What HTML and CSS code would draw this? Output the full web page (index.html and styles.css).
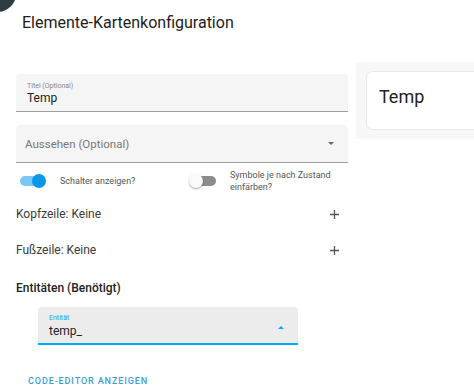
FILE: index.html
```html
<!DOCTYPE html>
<html lang="de">
<head>
  <meta charset="UTF-8">
  <title>Elemente-Kartenkonfiguration</title>
  <link rel="stylesheet" href="styles.css">
</head>
<body>
  <div class="dialog">
    <div class="corner"></div>
    <h2 class="dialog-title">Elemente-Kartenkonfiguration</h2>

    <div class="content">
      <div class="editor">
        <div class="field">
          <span class="field-label">Titel (Optional)</span>
          <span class="field-value">Temp</span>
        </div>

        <div class="field select">
          <span class="placeholder">Aussehen (Optional)</span>
          <span class="arrow down"></span>
        </div>

        <div class="switches">
          <div class="switch-item">
            <span class="switch on"><span class="knob"></span></span>
            <span class="switch-text">Schalter anzeigen?</span>
          </div>
          <div class="switch-item">
            <span class="switch off"><span class="knob"></span></span>
            <span class="switch-text">Symbole je nach Zustand<br>einfärben?</span>
          </div>
        </div>

        <div class="row">
          <span>Kopfzeile: Keine</span>
          <svg class="plus" viewBox="0 0 12 12"><path d="M6 1v10M1 6h10"/></svg>
        </div>
        <div class="row">
          <span>Fußzeile: Keine</span>
          <svg class="plus" viewBox="0 0 12 12"><path d="M6 1v10M1 6h10"/></svg>
        </div>

        <h3 class="section">Entitäten (Benötigt)</h3>

        <div class="field entity focused">
          <span class="field-label">Entität</span>
          <span class="field-value">temp_</span>
          <span class="arrow up"></span>
        </div>

        <a class="text-button" href="#">Code-Editor anzeigen</a>
      </div>

      <div class="preview">
        <div class="card">Temp</div>
      </div>
    </div>
  </div>
</body>
</html>
```

FILE: styles.css
```css
body {
  margin: 0;
  background-color: #ffffff;
  font-family: Roboto, "Noto Sans", Arial, sans-serif;
  color: #212121;
  overflow: hidden;
}
.dialog {
  position: relative;
  width: 474px;
  height: 390px;
  overflow: hidden;
}
.corner {
  position: absolute;
  left: -22px;
  top: -24px;
  width: 38px;
  height: 36px;
  border-radius: 50%;
  background-color: #2f3d42;
}
.dialog-title {
  margin: 0;
  padding: 13px 22px 11px;
  font-size: 16px;
  line-height: 20px;
  font-weight: 400;
  color: #222;
}
.content {
  display: flex;
  gap: 8px;
  margin-top: 18px;
  padding-left: 16px;
}
.editor {
  width: 332px;
  flex-shrink: 0;
  padding-top: 12px;
}
.field {
  position: relative;
  display: flex;
  flex-direction: column;
  height: 37px;
  box-sizing: content-box;
  padding: 0 11px;
  background-color: #f5f5f5;
  border-bottom: 1px solid #9e9e9e;
  border-radius: 4px 4px 0 0;
}
.field-label {
  margin-top: 8px;
  font-size: 7px;
  line-height: 9px;
  color: #888;
}
.field-value {
  font-size: 12px;
  line-height: 14px;
  color: #222;
}
.select {
  margin-top: 13px;
  justify-content: center;
  padding-left: 9px;
}
.placeholder {
  font-size: 11.5px;
  color: #777;
}
.arrow {
  position: absolute;
  right: 14px;
  top: 16px;
  width: 0;
  height: 0;
  border-left: 3.5px solid transparent;
  border-right: 3.5px solid transparent;
}
.arrow.down {
  top: 17px;
  border-top: 3.5px solid #666;
}
.arrow.up {
  top: 19px;
  border-bottom: 3.5px solid #03a9f4;
}
.switches {
  display: flex;
  height: 31px;
  align-items: center;
  margin-top: 2px;
}
.switch-item {
  display: flex;
  align-items: center;
  width: 170px;
}
.switch-item + .switch-item {
  width: auto;
}
.switch {
  position: relative;
  display: inline-block;
  width: 24px;
  height: 10px;
  border-radius: 5px;
  margin-left: 4px;
}
.switch.on {
  background-color: #7cc8f2;
}
.switch.off {
  background-color: #8c8c8c;
  margin-left: 6px;
}
.knob {
  position: absolute;
  top: -2px;
  width: 14px;
  height: 14px;
  border-radius: 50%;
}
.switch.on .knob {
  right: -2px;
  background-color: #0b97e8;
}
.switch.off .knob {
  left: -3px;
  background-color: #fafafa;
  box-shadow: 0 1px 2px rgba(0, 0, 0, 0.35);
}
.switch-text {
  margin-left: 16px;
  font-size: 9px;
  line-height: 12px;
  color: #555;
}
.switch-item + .switch-item .switch-text {
  margin-left: 14px;
}
.row {
  display: flex;
  justify-content: space-between;
  align-items: center;
  height: 36px;
  font-size: 12px;
  color: #3a3a3a;
}
.plus {
  width: 11px;
  height: 11px;
  margin-right: 8px;
  fill: none;
  stroke: #555;
  stroke-width: 1.4;
}
.section {
  margin: 12px 0 0;
  font-size: 12px;
  line-height: 16px;
  font-weight: 500;
  color: #222;
}
.entity {
  width: 238px;
  margin-top: 11px;
  margin-left: 22px;
  background-color: #ececec;
  border-bottom: 2px solid #03a9f4;
  height: 36px;
}
.entity .field-label {
  color: #2aa0e0;
  margin-top: 7px;
}
.entity .field-value {
  margin-top: 1px;
}
.text-button {
  display: inline-block;
  margin-top: 31px;
  margin-left: 12px;
  font-size: 9px;
  font-weight: 500;
  letter-spacing: 0.9px;
  text-transform: uppercase;
  text-decoration: none;
  color: #3a9fd8;
}
.preview {
  flex: 1;
  height: 77px;
  padding: 9px 0 0 10px;
  box-sizing: border-box;
  background-color: #f7f7f7;
}
.card {
  height: 59px;
  box-sizing: border-box;
  padding-left: 12px;
  display: flex;
  align-items: center;
  margin-right: -10px;
  padding-bottom: 8px;
  background-color: #fff;
  border: 1px solid #e8e8e8;
  border-radius: 7px;
  font-size: 18px;
  color: #222;
}
```
